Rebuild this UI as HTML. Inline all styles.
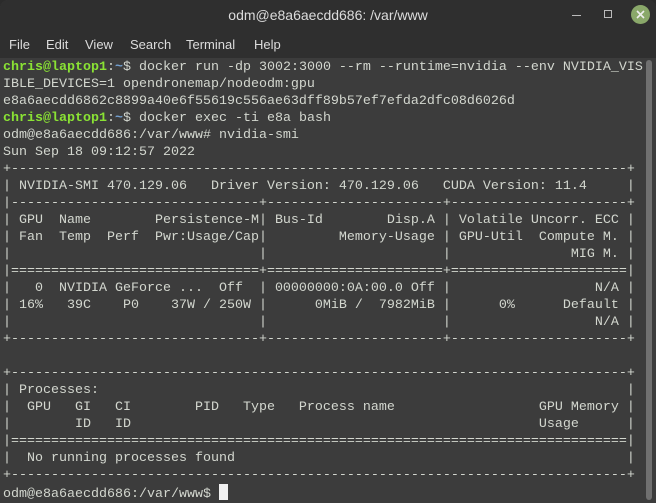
<!DOCTYPE html>
<html><head><meta charset="utf-8"><style>
html,body{margin:0;padding:0;background:#2b2b2b;}
.win{position:relative;width:656px;height:503px;background:#3c3c3c;border-radius:8px 8px 0 0;overflow:hidden;}
.title{position:absolute;left:0;top:0;width:656px;height:30px;background:#2f2f2f;color:#dcdcdc;font:14px "Liberation Sans",sans-serif;text-align:center;line-height:30px;}
.menu{position:absolute;left:0;top:30px;width:656px;height:28px;background:#2f2f2f;color:#dcdcdc;font:13px "Liberation Sans",sans-serif;}
.menu span{position:absolute;top:7px;}
.term{position:absolute;left:3px;top:59px;margin:0;font:13.33px/17px "Liberation Mono",monospace;color:#d3d7cf;white-space:pre;}
.g{color:#8ae234;font-weight:bold}.b{color:#729fcf;font-weight:bold}
.cur{display:inline-block;width:9px;height:16px;background:#f0f0f0;vertical-align:-3px;}
.sb{position:absolute;left:646px;top:60px;width:6px;height:440px;background:#707070;border-radius:3px;}
.close{position:absolute;left:631px;top:5px;width:19px;height:19px;border-radius:50%;background:#8aa86a;}
</style></head><body><div class="win">
<div class="title">odm@e8a6aecdd686: /var/www</div>
<div style="position:absolute;left:572px;top:15px;width:9px;height:1px;background:#bbb"></div>
<div style="position:absolute;left:604px;top:10px;width:6px;height:6px;border:1px solid #bbb"></div>
<div class="close"><svg width="19" height="19"><path d="M6 6L13 13M13 6L6 13" stroke="#eee" stroke-width="1.6"/></svg></div>
<div class="menu"><span style="left:9px">File</span><span style="left:46px">Edit</span><span style="left:85px">View</span><span style="left:130px">Search</span><span style="left:186px">Terminal</span><span style="left:254px">Help</span></div>
<pre class="term"><span class="g">chris@laptop1</span>:<span class="b">~</span>$ docker run -dp 3002:3000 --rm --runtime=nvidia --env NVIDIA_VIS
IBLE_DEVICES=1 opendronemap/nodeodm:gpu
e8a6aecdd6862c8899a40e6f55619c556ae63dff89b57ef7efda2dfc08d6026d
<span class="g">chris@laptop1</span>:<span class="b">~</span>$ docker exec -ti e8a bash
odm@e8a6aecdd686:/var/www# nvidia-smi
Sun Sep 18 09:12:57 2022
+-----------------------------------------------------------------------------+
| NVIDIA-SMI 470.129.06   Driver Version: 470.129.06   CUDA Version: 11.4     |
|-------------------------------+----------------------+----------------------+
| GPU  Name        Persistence-M| Bus-Id        Disp.A | Volatile Uncorr. ECC |
| Fan  Temp  Perf  Pwr:Usage/Cap|         Memory-Usage | GPU-Util  Compute M. |
|                               |                      |               MIG M. |
|===============================+======================+======================|
|   0  NVIDIA GeForce ...  Off  | 00000000:0A:00.0 Off |                  N/A |
| 16%   39C    P0    37W / 250W |      0MiB /  7982MiB |      0%      Default |
|                               |                      |                  N/A |
+-------------------------------+----------------------+----------------------+
                                                                               
+-----------------------------------------------------------------------------+
| Processes:                                                                  |
|  GPU   GI   CI        PID   Type   Process name                  GPU Memory |
|        ID   ID                                                   Usage      |
|=============================================================================|
|  No running processes found                                                 |
+-----------------------------------------------------------------------------+
odm@e8a6aecdd686:/var/www$ <span class="cur"></span></pre>
<div class="sb"></div>
</div></body></html>
